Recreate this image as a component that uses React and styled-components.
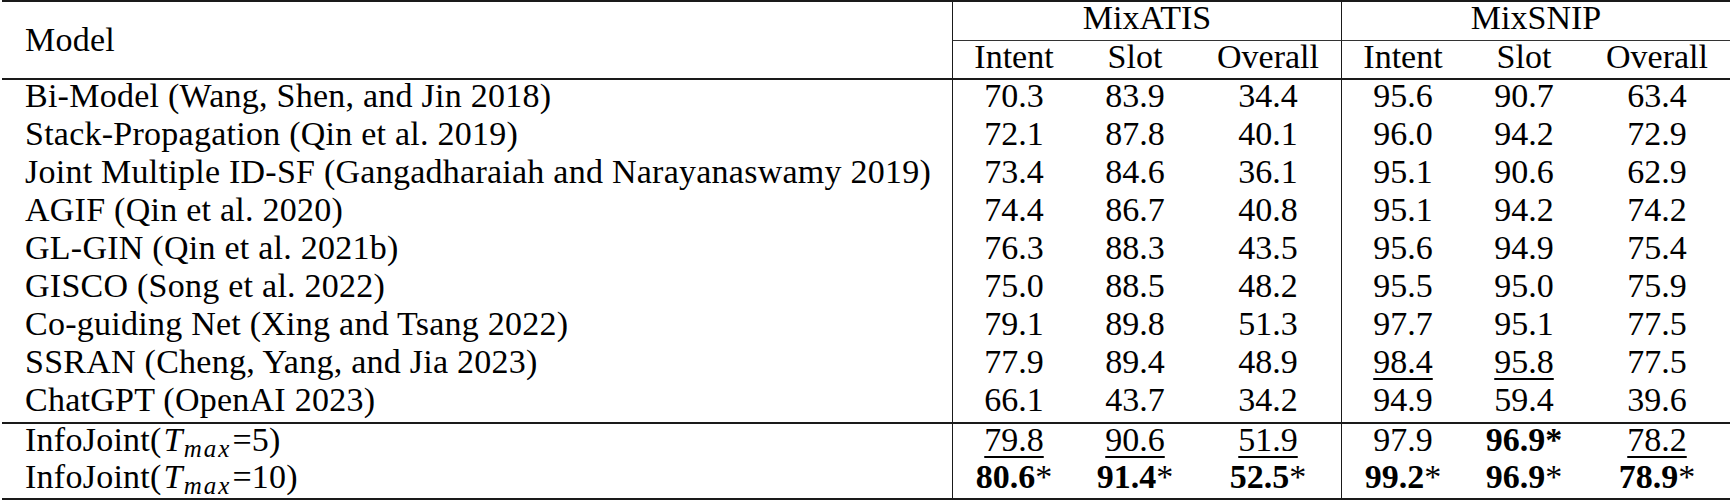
import React from 'react';
import styled, { createGlobalStyle } from 'styled-components';

const GlobalStyle = createGlobalStyle`
  html, body {
    margin: 0;
    padding: 0;
    background: #fff;
  }
  body {
    font-family: 'Liberation Serif', 'Times New Roman', serif;
    color: #000;
  }
`;

const Page = styled.div`
  width: 1732px;
  height: 502px;
  padding: 0 2px;
  box-sizing: border-box;
`;

const Grid = styled.div`
  display: grid;
  grid-template-columns: 950px 123px 120px 146px 123px 120px 146px;
  grid-template-rows: 39px 39px repeat(8, 38px) 40px 37px 37px;
  border-top: 2px solid #1a1a1a;
  border-bottom: 2px solid #1a1a1a;
  font-size: 34px;
  line-height: 32px;
`;

const Cell = styled.div`
  box-sizing: border-box;
  display: flex;
  align-items: ${(p) => (p.$middle ? 'center' : 'flex-start')};
  justify-content: ${(p) => (p.$left ? 'flex-start' : 'center')};
  padding-left: ${(p) => (p.$left ? '23px' : '0')};
  letter-spacing: ${(p) => (p.$left ? '0.25px' : '0')};
  white-space: nowrap;
  border-left: ${(p) => (p.$divider ? '1px solid #1a1a1a' : 'none')};
  border-bottom: ${(p) => (p.$rule === 'thick' ? '2px solid #1a1a1a' : p.$rule === 'thin' ? '1px solid #333' : 'none')};
  grid-column: ${(p) => p.$col || 'auto'};
  grid-row: ${(p) => p.$row || 'auto'};
`;

const Label = styled.span`
  display: inline-block;
`;

const Score = styled.span`
  font-weight: ${(p) => (p.$bold ? 700 : 400)};
  text-decoration: ${(p) => (p.$underline ? 'underline' : 'none')};
  text-decoration-thickness: 1.5px;
  text-underline-offset: 5px;
`;

const Star = styled.span`
  font-weight: ${(p) => (p.$bold ? 700 : 400)};
`;

const MathT = styled.i`
  font-style: italic;
  margin: 0 1px 0 2px;
`;

const Sub = styled.span`
  font-style: italic;
  font-size: 25px;
  line-height: 0;
  vertical-align: -6px;
  letter-spacing: 2px;
  margin-right: 1px;
`;

const baselines = [
  ['Bi-Model (Wang, Shen, and Jin 2018)', '70.3', '83.9', '34.4', '95.6', '90.7', '63.4'],
  ['Stack-Propagation (Qin et al. 2019)', '72.1', '87.8', '40.1', '96.0', '94.2', '72.9'],
  ['Joint Multiple ID-SF (Gangadharaiah and Narayanaswamy 2019)', '73.4', '84.6', '36.1', '95.1', '90.6', '62.9'],
  ['AGIF (Qin et al. 2020)', '74.4', '86.7', '40.8', '95.1', '94.2', '74.2'],
  ['GL-GIN (Qin et al. 2021b)', '76.3', '88.3', '43.5', '95.6', '94.9', '75.4'],
  ['GISCO (Song et al. 2022)', '75.0', '88.5', '48.2', '95.5', '95.0', '75.9'],
  ['Co-guiding Net (Xing and Tsang 2022)', '79.1', '89.8', '51.3', '97.7', '95.1', '77.5'],
  ['SSRAN (Cheng, Yang, and Jia 2023)', '77.9', '89.4', '48.9', { v: '98.4', u: true }, { v: '95.8', u: true }, '77.5'],
  ['ChatGPT (OpenAI 2023)', '66.1', '43.7', '34.2', '94.9', '59.4', '39.6'],
];

const ours = [
  {
    tmax: '5',
    scores: [
      { v: '79.8', u: true },
      { v: '90.6', u: true },
      { v: '51.9', u: true },
      '97.9',
      { v: '96.9', b: true, star: 'bold' },
      { v: '78.2', u: true },
    ],
  },
  {
    tmax: '10',
    scores: [
      { v: '80.6', b: true, star: 'plain' },
      { v: '91.4', b: true, star: 'plain' },
      { v: '52.5', b: true, star: 'plain' },
      { v: '99.2', b: true, star: 'plain' },
      { v: '96.9', b: true, star: 'plain' },
      { v: '78.9', b: true, star: 'plain' },
    ],
  },
];

function Value({ s }) {
  const d = typeof s === 'string' ? { v: s } : s;
  return (
    <Score $bold={d.b} $underline={d.u}>
      {d.v}
      {d.star && <Star $bold={d.star === 'bold'}>*</Star>}
    </Score>
  );
}

function ScoreCells({ scores, rule }) {
  return scores.map((s, i) => (
    <Cell key={i} $divider={i === 0 || i === 3} $rule={rule}>
      <Value s={s} />
    </Cell>
  ));
}

export default function App() {
  return (
    <Page>
      <GlobalStyle />
      <Grid>
        <Cell $left $middle $row="1 / span 2" $rule="thick">
          Model
        </Cell>
        <Cell $col="2 / span 3" $divider $rule="thin">
          MixATIS
        </Cell>
        <Cell $col="5 / span 3" $divider $rule="thin">
          MixSNIP
        </Cell>
        {['Intent', 'Slot', 'Overall', 'Intent', 'Slot', 'Overall'].map((h, i) => (
          <Cell key={h + i} $divider={i === 0 || i === 3} $rule="thick">
            {h}
          </Cell>
        ))}

        {baselines.map(([name, ...scores], r) => {
          const rule = r === baselines.length - 1 ? 'thick' : undefined;
          return (
            <React.Fragment key={name}>
              <Cell $left $rule={rule}>
                {name}
              </Cell>
              <ScoreCells scores={scores} rule={rule} />
            </React.Fragment>
          );
        })}

        {ours.map((row) => (
          <React.Fragment key={row.tmax}>
            <Cell $left>
              <Label>
                InfoJoint(<MathT>T</MathT>
                <Sub>max</Sub>={row.tmax})
              </Label>
            </Cell>
            <ScoreCells scores={row.scores} />
          </React.Fragment>
        ))}
      </Grid>
    </Page>
  );
}
